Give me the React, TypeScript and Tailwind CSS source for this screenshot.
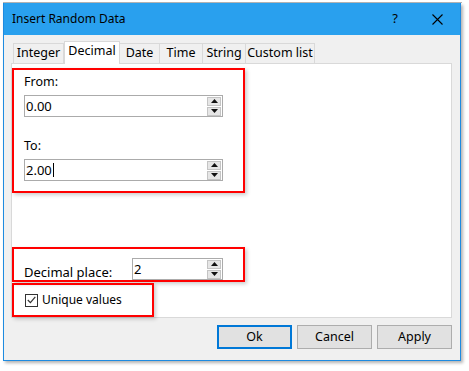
import React from 'react';

const font = { fontFamily: '"Noto Sans", "Open Sans", sans-serif' };

const Spinner: React.FC = () => (
    <div className="flex flex-col gap-[1px] mr-[1px]">
        <div className="w-[14px] h-[9px] border border-[#c4c4c4] bg-[#e6e6e6] flex items-center justify-center">
            <svg width="7" height="4" viewBox="0 0 7 4"><polygon points="0,4 7,4 3.5,0" fill="#111" /></svg>
        </div>
        <div className="w-[14px] h-[9px] border border-[#c4c4c4] bg-[#e6e6e6] flex items-center justify-center">
            <svg width="7" height="4" viewBox="0 0 7 4"><polygon points="0,0 7,0 3.5,4" fill="#111" /></svg>
        </div>
    </div>
);

const NumberInput: React.FC<{ value: string; width: string; caret?: boolean }> = ({ value, width, caret }) => (
    <div className={`${width} h-[22px] border border-[#ababab] bg-white flex items-center justify-between`}>
        <div className="flex items-center pl-[1px] text-[13px] leading-[16px] text-black">
            <span>{value}</span>
            {caret && <span className="w-px h-[14px] bg-black ml-[1px]"></span>}
        </div>
        <Spinner />
    </div>
);

const tabs = [
    { label: 'Integer', w: 'w-[51px]' },
    { label: 'Decimal', w: 'w-[56px]' },
    { label: 'Date', w: 'w-[40px]' },
    { label: 'Time', w: 'w-[43px]' },
    { label: 'String', w: 'w-[43px]' },
    { label: 'Custom list', w: 'w-[69px]' },
];

export default function App() {
    return (
        <div className="w-[469px] h-[371px] bg-white pt-[2px] pl-[3px]" style={font}>
            <div className="w-[459px] h-[360px] border-t border-t-[#b5b5b5] flex flex-col">
                <div className="w-[458px] h-[358px] border border-[#1e8be0] border-t-0 bg-[#f0f0f0] shadow-[2px_2px_3px_rgba(0,0,0,0.3)] flex flex-col">
                    {/* Title bar */}
                    <div className="h-[32px] bg-[#29a0ee] flex items-center text-[12px] text-black">
                        <span className="pl-[8px] flex-1">Insert Random Data</span>
                        <span className="text-[13px] mr-[34px]">?</span>
                        <svg width="11" height="11" viewBox="0 0 11 11" className="mr-[17px]">
                            <path d="M0.5 0.5 L10.5 10.5 M10.5 0.5 L0.5 10.5" stroke="#000" strokeWidth="1.1" />
                        </svg>
                    </div>

                    {/* Tabs */}
                    <div className="flex items-end mt-[6px] ml-[9px] relative z-10 text-[12.5px] text-black">
                        {tabs.map((t, i) => {
                            const active = i === 1;
                            return (
                                <div
                                    key={t.label}
                                    className={`${t.w} flex items-center justify-center border-[#d9d9d9] ${active
                                        ? 'h-[23px] -mb-px bg-white border border-b-0 pb-[3px]'
                                        : `h-[20px] bg-[#f0f0f0] border-t border-r ${i === 0 ? 'border-l' : ''}`
                                        }`}
                                >
                                    {t.label}
                                </div>
                            );
                        })}
                    </div>

                    {/* Panel */}
                    <div className="ml-[7px] w-[441px] h-[255px] border border-[#d9d9d9] bg-white text-[12.5px] text-black">
                        {/* From / To */}
                        <div className="mt-[4px] w-[233px] h-[125px] border-2 border-[#ff0000] shadow-[2px_2px_4px_rgba(0,0,0,0.2)] pl-[10px] pt-[4px] flex flex-col">
                            <div className="leading-[16px]">From:</div>
                            <div className="mt-[5px]">
                                <NumberInput value="0.00" width="w-[199px]" />
                            </div>
                            <div className="leading-[16px] mt-[21px]">To:</div>
                            <div className="mt-[5px]">
                                <NumberInput value="2.00" width="w-[199px]" caret />
                            </div>
                        </div>

                        {/* Decimal place */}
                        <div className="mt-[54px] w-[233px] h-[35px] border-2 border-[#ff0000] shadow-[2px_2px_4px_rgba(0,0,0,0.2)] pl-[10px] pt-[10px] flex items-end">
                            <div className="w-[108px] leading-[16px] text-[13px]">Decimal place:</div>
                            <NumberInput value="2" width="w-[91px]" />
                        </div>

                        {/* Unique values */}
                        <div className="mt-px w-[142px] h-[34px] border-2 border-[#ff0000] shadow-[2px_2px_4px_rgba(0,0,0,0.2)] pl-[11px] flex items-center">
                            <div className="w-[13px] h-[13px] border border-[#333] bg-white flex items-center justify-center">
                                <svg width="9" height="8" viewBox="0 0 9 8">
                                    <path d="M0.8 4 L3.4 6.6 L8.3 0.8" stroke="#333" strokeWidth="1.2" fill="none" />
                                </svg>
                            </div>
                            <span className="ml-[4px] text-[12px] leading-[16px]">Unique values</span>
                        </div>
                    </div>

                    {/* Buttons */}
                    <div className="flex justify-end gap-[5px] mt-[7px] mr-[8px] text-[12.5px] text-black">
                        <button className="w-[75px] h-[24px] border-2 border-[#0078d7] bg-[#e1e1e1]">Ok</button>
                        <button className="w-[75px] h-[24px] border border-[#adadad] bg-[#e1e1e1]">Cancel</button>
                        <button className="w-[75px] h-[24px] border border-[#adadad] bg-[#e1e1e1]">Apply</button>
                    </div>
                </div>
            </div>
        </div>
    );
}
